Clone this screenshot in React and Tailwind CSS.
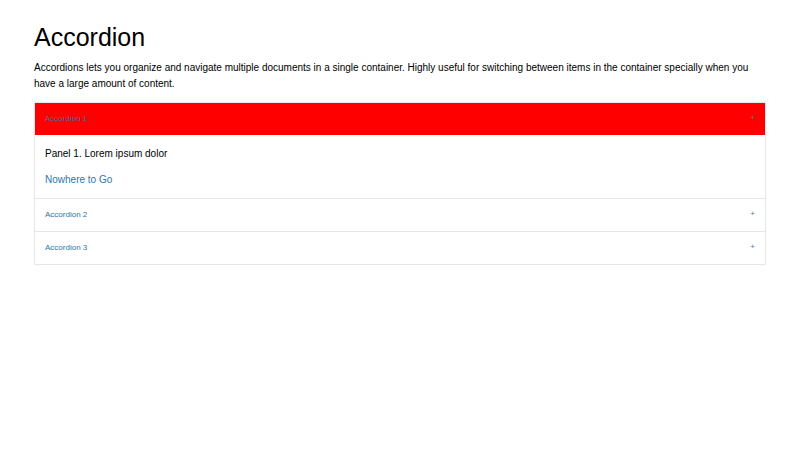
import { useState } from 'react';

const items = [
  { id: 1, title: 'Accordion 1', body: 'Panel 1. Lorem ipsum dolor' },
  { id: 2, title: 'Accordion 2', body: 'Panel 2. Lorem ipsum dolor' },
  { id: 3, title: 'Accordion 3', body: 'Panel 3. Lorem ipsum dolor' },
];

export default function App() {
  const [open, setOpen] = useState(1);

  return (
    <div className="min-h-screen bg-white px-[34px] pt-[21px] text-black"
      style={{ fontFamily: '"Liberation Sans", Arial, sans-serif' }}>
      <h1 className="text-[25px] leading-[32px] font-normal">Accordion</h1>
      <p className="mt-[7px] text-[10px] leading-[16px]">
        Accordions lets you organize and navigate multiple documents in a single container. Highly useful for switching between items in the container specially when you have a large amount of content.
      </p>

      <div className="mt-[10px] border border-[#e6e6e6]">
        {items.map((item, i) => (
          <div key={item.id} className={i > 0 ? 'border-t border-[#e6e6e6]' : ''}>
            <button
              onClick={() => setOpen(open === item.id ? 0 : item.id)}
              className={`w-full h-[32px] flex items-center justify-between pl-[10px] pr-[10px] text-left ${
                open === item.id ? 'bg-[#ff0000]' : 'bg-white'
              }`}
            >
              <span className="text-[8px] text-[#2a77a8]">{item.title}</span>
              <span className="text-[8px] text-[#4a7a9a] -mt-[3px]">+</span>
            </button>
            {open === item.id && (
              <div className="px-[10px] pt-[12px] pb-[11px]">
                <p className="text-[10px] leading-[14px]">{item.body}</p>
                <a href="#" className="block mt-[12px] text-[10px] leading-[14px] text-[#2a78ac]">
                  Nowhere to Go
                </a>
              </div>
            )}
          </div>
        ))}
      </div>
    </div>
  );
}
